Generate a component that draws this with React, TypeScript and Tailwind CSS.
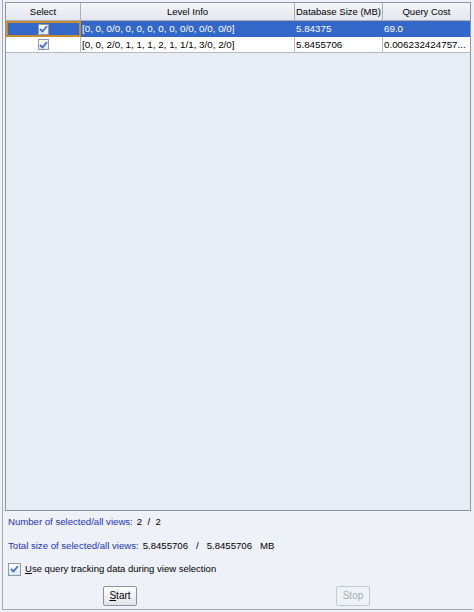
import React from "react";

const rows = [
  { info: "[0, 0, 0/0, 0, 0, 0, 0, 0, 0/0, 0/0, 0/0]", size: "5.84375", cost: "69.0", selected: true },
  { info: "[0, 0, 2/0, 1, 1, 1, 2, 1, 1/1, 3/0, 2/0]", size: "5.8455706", cost: "0.006232424757...", selected: false },
];

const Check = ({ size = 11 }: { size?: number }) => (
  <span
    className="inline-flex items-center justify-center border border-[#8d97a8] bg-gradient-to-b from-white to-[#dfe5ef]"
    style={{ width: size, height: size }}
  >
    <svg width="9" height="8" viewBox="0 0 9 8">
      <path d="M1 4 L3.5 6.5 L8 1" fill="none" stroke="#3d6fcf" strokeWidth="1.8" />
    </svg>
  </span>
);

export default function App() {
  return (
    <div className="w-[474px] h-[612px] bg-[#eef1f7] text-[10px] leading-[14px] text-black" style={{ fontFamily: '"Liberation Sans", Arial, sans-serif' }}>
      <div className="flex flex-col h-[610px] border-l border-b border-[#a4a9b3] ml-[2px] mr-[1px]">
        <div className="mt-[2px] ml-[2px] mr-[2px] h-[509px] border border-[#8e939c] bg-[#e9edf5] flex flex-col">
          <div className="grid grid-cols-[75px_214px_88px_1fr] h-[18px] shrink-0 bg-gradient-to-b from-[#f3f5f9] to-[#e3e7ee] border-b border-[#a9aeb7] text-[9.5px] whitespace-nowrap">
            <div className="flex items-center justify-center border-r border-[#a9aeb7]">Select</div>
            <div className="flex items-center justify-center border-r border-[#a9aeb7]">Level Info</div>
            <div className="flex items-center justify-center border-r border-[#a9aeb7] overflow-hidden">Database Size (MB)</div>
            <div className="flex items-center justify-center">Query Cost</div>
          </div>
          {rows.map((r, i) => (
            <div
              key={i}
              className={
                "grid grid-cols-[75px_214px_88px_1fr] h-[16px] shrink-0 text-[9.8px] " +
                (r.selected ? "bg-[#3468c8] text-white" : "bg-white text-black")
              }
            >
              <div
                className={
                  "flex items-center justify-center " +
                  (r.selected ? "border-2 border-[#c88a33]" : "border-r border-b border-[#b5bac3]")
                }
              >
                <Check size={11} />
              </div>
              <div className={"flex items-center pl-[1px] whitespace-nowrap overflow-hidden " + (r.selected ? "" : "border-r border-b border-[#b5bac3]")}>
                {r.info}
              </div>
              <div className={"flex items-center pl-[1px] whitespace-nowrap overflow-hidden " + (r.selected ? "" : "border-r border-b border-[#b5bac3]")}>
                {r.size}
              </div>
              <div className={"flex items-center pl-[1px] whitespace-nowrap overflow-hidden " + (r.selected ? "" : "border-b border-[#b5bac3]")}>
                {r.cost}
              </div>
            </div>
          ))}
        </div>
        <div className="flex flex-col pl-[5px] pt-[3px] text-[9.6px]">
          <div className="h-[16px] flex items-center whitespace-nowrap">
            <span className="text-[#2333b8]">Number of selected/all views:</span>
            <span className="ml-[4px]">2&nbsp;&nbsp;/&nbsp;&nbsp;2</span>
          </div>
          <div className="h-[16px] mt-[8px] flex items-center whitespace-nowrap">
            <span className="text-[#2333b8]">Total size of selected/all views:</span>
            <span className="ml-[4px]">5.8455706&nbsp;&nbsp;&nbsp;/&nbsp;&nbsp;&nbsp;5.8455706&nbsp;&nbsp;&nbsp;MB</span>
          </div>
          <div className="h-[16px] mt-[7px] flex items-center gap-[4px] text-[9.5px]">
            <Check size={13} />
            <span>
              <span className="underline">U</span>se query tracking data during view selection
            </span>
          </div>
          <div className="flex mt-[9px]">
            <button className="ml-[95px] w-[34px] h-[20px] border border-[#8e939c] rounded-[2px] bg-gradient-to-b from-white to-[#e0e4ea] text-[10px]">
              <span className="underline">S</span>tart
            </button>
            <button className="ml-[199px] w-[34px] h-[20px] border border-[#c4c8cf] rounded-[2px] bg-[#eef1f7] text-[#a7abb3] text-[10px]">
              Stop
            </button>
          </div>
        </div>
      </div>
    </div>
  );
}
